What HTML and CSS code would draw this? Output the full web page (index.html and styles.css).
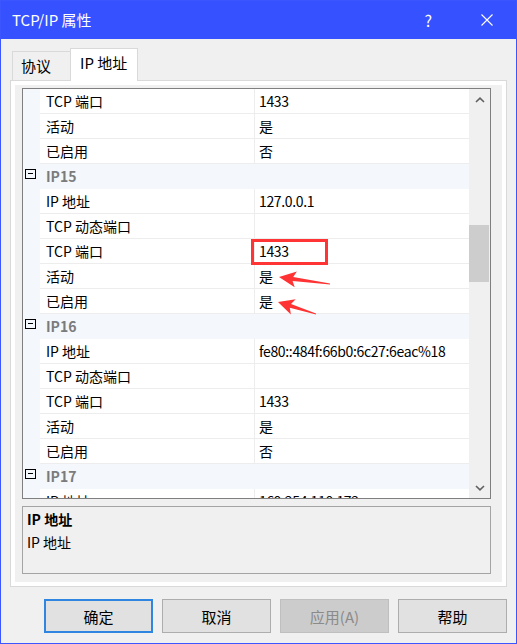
FILE: index.html
```html
<!DOCTYPE html>
<html lang="zh-CN">
<head>
<meta charset="utf-8">
<title>TCP/IP 属性</title>
<link rel="stylesheet" href="styles.css">
</head>
<body>
<div class="window">
  <div class="titlebar">
    <span class="title">TCP/IP 属性</span>
    <span class="help">?</span>
    <svg class="close" width="12" height="12" viewBox="0 0 12 12"><path d="M0.5 0.5 L11.5 11.5 M11.5 0.5 L0.5 11.5" stroke="#fff" stroke-width="1.1" fill="none"/></svg>
  </div>
  <div class="tabs">
    <div class="tab">协议</div>
    <div class="tab active">IP 地址</div>
  </div>
  <div class="tabpage">
    <div class="pagebody">
      <div class="grid">
        <div class="rows">
          <div class="row"><div class="m"></div><div class="n">TCP 端口</div><div class="v">1433</div></div>
          <div class="row"><div class="m"></div><div class="n">活动</div><div class="v">是</div></div>
          <div class="row"><div class="m"></div><div class="n">已启用</div><div class="v">否</div></div>
          <div class="row cat"><div class="m"><span class="exp"></span></div><div class="c">IP15</div></div>
          <div class="row"><div class="m"></div><div class="n">IP 地址</div><div class="v">127.0.0.1</div></div>
          <div class="row"><div class="m"></div><div class="n">TCP 动态端口</div><div class="v"></div></div>
          <div class="row"><div class="m"></div><div class="n">TCP 端口</div><div class="v">1433</div></div>
          <div class="row"><div class="m"></div><div class="n">活动</div><div class="v">是</div></div>
          <div class="row"><div class="m"></div><div class="n">已启用</div><div class="v">是</div></div>
          <div class="row cat"><div class="m"><span class="exp"></span></div><div class="c">IP16</div></div>
          <div class="row"><div class="m"></div><div class="n">IP 地址</div><div class="v">fe80::484f:66b0:6c27:6eac%18</div></div>
          <div class="row"><div class="m"></div><div class="n">TCP 动态端口</div><div class="v"></div></div>
          <div class="row"><div class="m"></div><div class="n">TCP 端口</div><div class="v">1433</div></div>
          <div class="row"><div class="m"></div><div class="n">活动</div><div class="v">是</div></div>
          <div class="row"><div class="m"></div><div class="n">已启用</div><div class="v">否</div></div>
          <div class="row cat"><div class="m"><span class="exp"></span></div><div class="c">IP17</div></div>
          <div class="row"><div class="m"></div><div class="n">IP 地址</div><div class="v">169.254.110.172</div></div>
        </div>
        <div class="scrollbar">
          <div class="sb-btn"><svg width="10" height="6" viewBox="0 0 10 6"><path d="M1 5 L5 1.2 L9 5" stroke="#606060" stroke-width="1.6" fill="none"/></svg></div>
          <div class="sb-track"><div class="sb-thumb"></div></div>
          <div class="sb-btn"><svg width="10" height="6" viewBox="0 0 10 6"><path d="M1 1 L5 4.8 L9 1" stroke="#606060" stroke-width="1.6" fill="none"/></svg></div>
        </div>
      </div>
      <div class="desc">
        <div class="desc-title">IP 地址</div>
        <div class="desc-text">IP 地址</div>
      </div>
    </div>
  </div>
  <div class="buttons">
    <button class="btn default">确定</button>
    <button class="btn">取消</button>
    <button class="btn disabled">应用(A)</button>
    <button class="btn">帮助</button>
  </div>
  <div class="redbox"></div>
  <svg class="arrows" width="70" height="60" viewBox="270 262 70 60">
    <polygon fill="#ff3333" points="279,277 296.9,271.4 293.2,276.9 330,283.4 330,284.6 292.6,280.9 294.7,287.2"/>
    <polygon fill="#ff3333" points="278,302 295.7,299.2 291,304 316,313.4 316,314.6 289.8,307.8 290.9,314.4"/>
  </svg>
</div>
</body>
</html>
```
FILE: styles.css
```css
html, body {
  margin: 0;
  padding: 0;
  background: #f0f0f0;
}
.window {
  position: relative;
  width: 517px;
  height: 644px;
  box-sizing: border-box;
  border: 1px solid #3b55ff;
  background: #f0f0f0;
  font-family: "Noto Sans CJK SC", "Noto Sans", sans-serif;
  color: #000;
  overflow: hidden;
}
.titlebar {
  height: 38px;
  background: #3651ff;
  color: #fff;
  display: flex;
  align-items: center;
  padding-left: 11px;
  font-size: 15px;
}
.title {
  flex: 1;
  line-height: 20px;
}
.help {
  font-size: 16px;
  line-height: 20px;
  margin-right: 49px;
}
.close {
  margin-right: 23px;
}
.tabs {
  height: 41px;
  display: flex;
  align-items: flex-end;
  padding-left: 11px;
  font-size: 15px;
}
.tab {
  box-sizing: border-box;
  height: 29px;
  width: 58px;
  border: 1px solid #d9d9d9;
  border-bottom: none;
  border-right: none;
  background: #f0f0f0;
  line-height: 27px;
  padding-left: 8px;
}
.tab.active {
  position: relative;
  z-index: 1;
  height: 33px;
  width: 68px;
  margin-bottom: -1px;
  background: #fff;
  border-right: 1px solid #d9d9d9;
  padding-left: 9px;
  line-height: 28px;
}
.tabpage {
  box-sizing: border-box;
  margin-left: 9px;
  width: 497px;
  height: 507px;
  border: 1px solid #d9d9d9;
  background: #fff;
  padding: 4px;
}
.pagebody {
  height: 100%;
  background: #f0f0f0;
  padding: 3px 0 0 7px;
  box-sizing: border-box;
}
.grid {
  box-sizing: border-box;
  width: 469px;
  height: 411px;
  border: 1px solid #7f7f7f;
  display: flex;
  background: #fff;
}
.rows {
  width: 446px;
  height: 409px;
  overflow: hidden;
  font-size: 14px;
}
.row {
  display: grid;
  grid-template-columns: 17px 215px 214px;
  height: 25px;
}
.row .m {
  background: #f4f7fc;
  position: relative;
}
.row .n {
  box-sizing: border-box;
  border-right: 1px solid #ededed;
  border-bottom: 1px solid #ededed;
  padding-left: 6px;
  line-height: 24px;
  white-space: nowrap;
}
.row .v {
  box-sizing: border-box;
  border-bottom: 1px solid #ededed;
  padding-left: 4px;
  line-height: 24px;
  white-space: nowrap;
  letter-spacing: -0.35px;
}
.row.cat {
  grid-template-columns: 17px 429px;
  background: #f4f7fc;
}
.row .c {
  padding-left: 6px;
  line-height: 25px;
  font-weight: bold;
  color: #7b7b7b;
}
.exp {
  position: absolute;
  left: 2px;
  top: 5px;
  width: 11px;
  height: 10px;
  box-sizing: border-box;
  border: 1.6px solid #000;
}
.exp::after {
  content: "";
  position: absolute;
  left: 2px;
  right: 2px;
  top: 2.6px;
  height: 1.6px;
  background: #000;
}
.scrollbar {
  width: 21px;
  height: 409px;
  background: #f0f0f0;
  display: flex;
  flex-direction: column;
}
.sb-btn {
  height: 21px;
  display: flex;
  align-items: center;
  justify-content: center;
}
.sb-track {
  flex: 1;
}
.sb-thumb {
  margin-top: 115px;
  width: 20px;
  height: 57px;
  background: #cdcdcd;
}
.desc {
  box-sizing: border-box;
  margin-top: 7px;
  width: 469px;
  height: 68px;
  border: 1px solid #a5a5a5;
  background: #f0f0f0;
  padding: 1px 0 0 4px;
  font-size: 14px;
  line-height: 23px;
}
.desc-title {
  font-weight: bold;
}
.buttons {
  display: flex;
  gap: 9px;
  margin-top: 12px;
  padding-left: 43px;
}
.btn {
  box-sizing: border-box;
  width: 109px;
  height: 34px;
  border: 1px solid #adadad;
  background: #e1e1e1;
  font-family: "Noto Sans CJK SC", "Noto Sans", sans-serif;
  font-size: 15px;
  color: #000;
  padding: 0;
}
.btn.default {
  border: 2px solid #2f86e0;
}
.btn.disabled {
  background: #cccccc;
  border-color: #bfbfbf;
  color: #8a8a8a;
}
.redbox {
  position: absolute;
  left: 250px;
  top: 238px;
  width: 77px;
  height: 26px;
  box-sizing: border-box;
  border: 3px solid #ff3535;
}
.arrows {
  position: absolute;
  left: 269px;
  top: 261px;
}
```
